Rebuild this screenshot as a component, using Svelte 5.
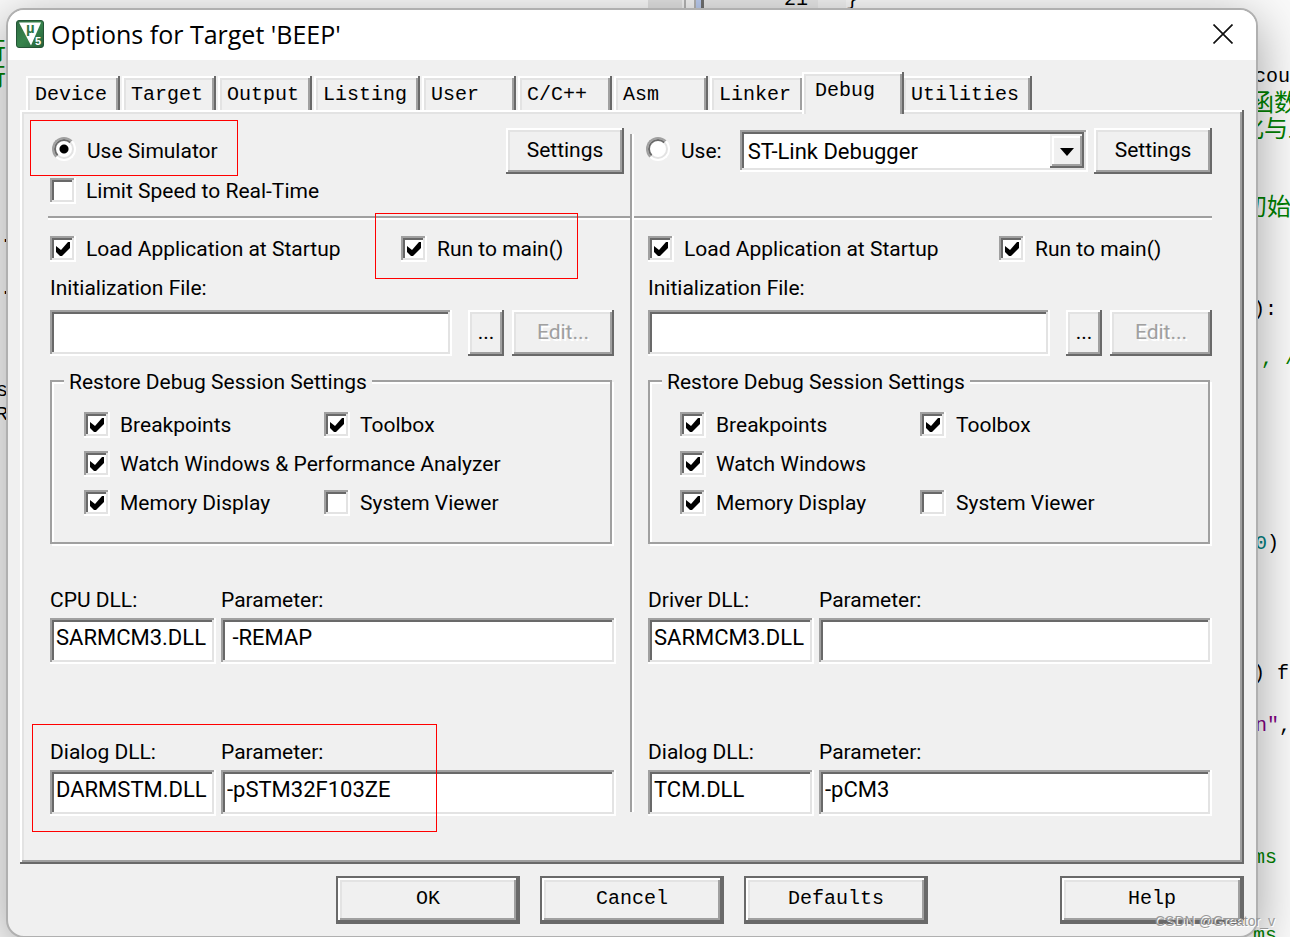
<script lang="ts">
  const tabs = ['Device', 'Target', 'Output', 'Listing', 'User', 'C/C++', 'Asm', 'Linker', 'Debug', 'Utilities'];
  let activeTab = $state('Debug');
  let mode = $state('simulator');

  const panes = $state([
    {
      id: 'sim',
      load: true,
      runToMain: true,
      initFile: '',
      restore: [
        { label: 'Breakpoints', checked: true },
        { label: 'Toolbox', checked: true },
        { label: 'Watch Windows & Performance Analyzer', checked: true, wide: true },
        { label: 'Memory Display', checked: true },
        { label: 'System Viewer', checked: false },
      ],
      dlls: [
        { label: 'CPU DLL:', name: 'SARMCM3.DLL', param: ' -REMAP' },
        { label: 'Dialog DLL:', name: 'DARMSTM.DLL', param: '-pSTM32F103ZE' },
      ],
    },
    {
      id: 'drv',
      load: true,
      runToMain: true,
      initFile: '',
      restore: [
        { label: 'Breakpoints', checked: true },
        { label: 'Toolbox', checked: true },
        { label: 'Watch Windows', checked: true, wide: true },
        { label: 'Memory Display', checked: true },
        { label: 'System Viewer', checked: false },
      ],
      dlls: [
        { label: 'Driver DLL:', name: 'SARMCM3.DLL', param: '' },
        { label: 'Dialog DLL:', name: 'TCM.DLL', param: '-pCM3' },
      ],
    },
  ]);

  // visible scraps of the source editor behind the dialog
  const code = [
    { x: 784, y: -13, text: '21', color: '#000' },
    { x: 846, y: -13, text: '}', color: '#000' },
    { x: 1254, y: 64, text: 'cou', color: '#000' },
    { x: 1250, y: 88, text: '函数', color: '#008000', cjk: true },
    { x: 1240, y: 114, text: '化与工', color: '#008000', cjk: true },
    { x: 1243, y: 192, text: '初始', color: '#008000', cjk: true },
    { x: 1253, y: 297, text: '):', color: '#000' },
    { x: 1261, y: 346, text: ', /', color: '#008000' },
    { x: 1255, y: 531, text: '0', color: '#008080' },
    { x: 1267, y: 531, text: ')', color: '#000' },
    { x: 1253, y: 661, text: ') f', color: '#000' },
    { x: 1255, y: 713, text: 'n"', color: '#800080' },
    { x: 1279, y: 713, text: ',', color: '#000' },
    { x: 1253, y: 845, text: 'ms', color: '#008000' },
    { x: 1253, y: 923, text: 'ms', color: '#008000' },
    { x: -18, y: 36, text: '行', color: '#008000', cjk: true },
    { x: -18, y: 62, text: '行', color: '#008000', cjk: true },
    { x: 0, y: 224, text: '.', color: '#000' },
    { x: 0, y: 276, text: '.', color: '#000' },
    { x: -4, y: 378, text: 's', color: '#000' },
    { x: -4, y: 402, text: 'R', color: '#000' },
  ];
</script>

<div class="desktop">
  <div class="editor" aria-hidden="true">
    <div class="gutter"></div>
    {#each code as bit}
      <span class:cjk={bit.cjk} style="left: {bit.x}px; top: {bit.y}px; color: {bit.color}">{bit.text}</span>
    {/each}
  </div>

  <div class="dialog" role="dialog" aria-labelledby="dialog-title">
    <header class="titlebar">
      <svg class="logo" viewBox="0 0 28 28" aria-hidden="true">
        <defs>
          <linearGradient id="logo-bg" x1="0" y1="0" x2="1" y2="1">
            <stop offset="0" stop-color="#2f6b42" />
            <stop offset="0.5" stop-color="#37844c" />
            <stop offset="1" stop-color="#25603a" />
          </linearGradient>
        </defs>
        <rect x="0.5" y="0.5" width="27" height="27" rx="2.5" fill="url(#logo-bg)" stroke="#245436" />
        <path d="M3 2.5H25L15 25.5Z" fill="#fff" />
        <text class="mu" x="10" y="13">µ</text>
        <text class="five" x="19" y="25">5</text>
      </svg>
      <h1 id="dialog-title">Options for Target 'BEEP'</h1>
      <button class="close" aria-label="Close">
        <svg viewBox="0 0 20 20"><path d="M0.5 0.5L19.5 19.5M19.5 0.5L0.5 19.5" fill="none" stroke="#111" stroke-width="1.7" /></svg>
      </button>
    </header>

    <div class="tabs" role="tablist">
      {#each tabs as tab}
        <button
          class="tab"
          class:active={tab === activeTab}
          role="tab"
          aria-selected={tab === activeTab}
          onclick={() => (activeTab = tab)}>{tab}</button>
      {/each}
    </div>

    <main class="panel">
      {#each panes as pane, i}
        {#if i === 1}
          <div class="divider"></div>
        {/if}
        <section class="pane {pane.id}">
          <div class="top">
            {#if pane.id === 'sim'}
              <div class="line">
                <label class="check"><input type="radio" name="mode" value="simulator" bind:group={mode} />Use Simulator</label>
                <button class="btn settings">Settings</button>
              </div>
              <label class="check"><input type="checkbox" />Limit Speed to Real-Time</label>
            {:else}
              <div class="line">
                <label class="check"><input type="radio" name="mode" value="driver" bind:group={mode} />Use:</label>
                <div class="combo">
                  <select aria-label="Debug driver">
                    <option>ST-Link Debugger</option>
                  </select>
                  <span class="arrow"></span>
                </div>
                <button class="btn settings">Settings</button>
              </div>
            {/if}
          </div>

          <hr />

          <div class="startup">
            <label class="check"><input type="checkbox" bind:checked={pane.load} />Load Application at Startup</label>
            <label class="check"><input type="checkbox" bind:checked={pane.runToMain} />Run to main()</label>
          </div>

          <label class="caption" for="{pane.id}-init">Initialization File:</label>
          <div class="file">
            <input class="field" type="text" id="{pane.id}-init" bind:value={pane.initFile} />
            <button class="btn browse" aria-label="Browse">...</button>
            <button class="btn edit" disabled>Edit...</button>
          </div>

          <fieldset>
            <legend>Restore Debug Session Settings</legend>
            <div class="options">
              {#each pane.restore as item}
                <label class="check" class:wide={item.wide}>
                  <input type="checkbox" bind:checked={item.checked} />{item.label}
                </label>
              {/each}
            </div>
          </fieldset>

          {#each pane.dlls as dll, n}
            <div class="dll">
              <label class="caption" for="{pane.id}-dll-{n}">{dll.label}</label>
              <label class="caption" for="{pane.id}-param-{n}">Parameter:</label>
              <input class="field" type="text" id="{pane.id}-dll-{n}" bind:value={dll.name} />
              <input class="field" type="text" id="{pane.id}-param-{n}" bind:value={dll.param} />
            </div>
          {/each}
        </section>
      {/each}

      <div class="mark mark-simulator"></div>
      <div class="mark mark-run"></div>
      <div class="mark mark-dialog"></div>
    </main>

    <footer>
      <button class="action">OK</button>
      <button class="action">Cancel</button>
      <button class="action">Defaults</button>
      <button class="action help">Help</button>
    </footer>
  </div>

  <div class="watermark">CSDN @Greator_v</div>
</div>

<style>
  :global(body) {
    margin: 0;
    background: #fafafa;
  }

  .desktop {
    position: relative;
    box-sizing: border-box;
    height: 100vh;
    padding: 8px 32px 0 6px;
    overflow: hidden;
    font-family: Roboto, sans-serif;
    font-size: 21px;
    line-height: 28px;
    color: #000;
  }

  .editor {
    position: absolute;
    inset: 0;
    font: 20px/26px 'Liberation Mono', monospace;
  }
  .editor span {
    position: absolute;
    white-space: pre;
  }
  .editor .cjk {
    font-family: 'Noto Sans CJK SC', sans-serif;
    font-size: 24px;
  }
  .gutter {
    height: 8px;
    margin-left: 648px;
    background: linear-gradient(
      to right,
      #e2e2e2 34px, #f4f4f4 34px 36px, #b4b4b4 36px 38px, #f4f4f4 38px 46px, #b4b4b4 46px 48px,
      #bccdf0 48px 53px, #707070 53px 56px, #e8e8e8 56px 170px, #f2f2f2 170px 198px, transparent 198px
    );
  }

  .dialog {
    position: relative;
    box-sizing: border-box;
    border: 2px solid #b0b0b0;
    border-radius: 18px;
    background: #f0f0f0;
    box-shadow: 0 12px 50px rgba(0, 0, 0, 0.36);
    overflow: hidden;
  }

  button,
  input,
  select {
    margin: 0;
    border: 0;
    border-radius: 0;
    font: inherit;
    color: inherit;
  }

  .titlebar {
    display: flex;
    align-items: center;
    box-sizing: border-box;
    height: 50px;
    padding: 0 23px 2px 8px;
    background: #fff;
  }
  .logo {
    width: 28px;
    height: 28px;
    font-family: 'Liberation Sans', sans-serif;
    font-weight: bold;
  }
  .mu {
    font-size: 15px;
    fill: #2f7746;
  }
  .five {
    font-size: 11px;
    fill: #fff;
  }
  h1 {
    flex: 1;
    margin: 0 0 0 7px;
    font: 400 25px/32px 'Open Sans', sans-serif;
  }
  .close {
    width: 20px;
    height: 20px;
    padding: 0;
    background: none;
  }
  .close svg {
    display: block;
  }

  .tabs {
    display: flex;
    align-items: flex-end;
    gap: 2px;
    padding: 16px 18px 0;
  }
  .tab {
    min-width: 94px;
    height: 34px;
    padding: 4px 13px 0 9px;
    background: #f0f0f0;
    box-shadow: inset 2px 0 #fff, inset -2px 0 #696969, inset 0 2px #fff, inset -4px 0 #a0a0a0, inset 4px 4px #e3e3e3;
    font: 20px/28px 'Liberation Mono', monospace;
    text-align: left;
  }
  .tab.active {
    position: relative;
    z-index: 1;
    height: 42px;
    margin: -4px -4px -4px;
    padding: 0 15px 4px 13px;
    min-width: 102px;
  }

  .panel {
    position: relative;
    display: grid;
    grid-template-columns: calc(50% - 1px) 4px 1fr;
    margin: 0 12px;
    padding: 18px 30px 48px 28px;
    box-shadow: inset -2px -2px #696969, inset 2px 2px #fff, inset -4px -4px #a0a0a0, inset 4px 4px #e3e3e3;
  }
  .divider {
    margin: 6px 0 4px;
    background: linear-gradient(to right, #a0a0a0 2px, #fff 2px);
  }

  .sim {
    padding: 0 16px 0 2px;
  }
  .drv {
    padding: 0 2px 0 14px;
  }

  .top {
    height: 88px;
  }
  .line {
    display: flex;
    align-items: center;
    height: 46px;
  }
  .drv .line {
    margin-left: -4px;
  }
  .top > .check {
    height: 34px;
  }
  .sim .settings {
    margin: 0 -10px 0 auto;
  }
  .drv .settings {
    margin-left: 6px;
  }

  hr {
    height: 2px;
    margin: 0 -16px 0 -2px;
    border: 0;
    border-bottom: 2px solid #fff;
    background: #a0a0a0;
  }
  .drv hr {
    margin: 0 0 0 -14px;
  }

  .check {
    display: flex;
    align-items: center;
    gap: 10px;
    white-space: nowrap;
  }
  input[type='checkbox'],
  input[type='radio'] {
    appearance: none;
    display: grid;
    place-content: center;
    flex: none;
    width: 26px;
    height: 26px;
    background: #fff;
  }
  input[type='checkbox'],
  .field,
  .combo {
    box-shadow: inset -2px -2px #fff, inset 2px 2px #a0a0a0, inset -4px -4px #e3e3e3, inset 4px 4px #696969;
  }
  input[type='checkbox']:checked::before {
    content: '';
    width: 14px;
    height: 14px;
    background: #000;
    clip-path: polygon(0 4px, 5px 8px, 12px 0, 14px 0, 14px 6px, 6px 14px, 4px 14px, 0 10px);
  }
  input[type='radio'] {
    box-sizing: border-box;
    width: 24px;
    height: 24px;
    margin: 0 1px 4px 2px;
    border: 2px solid;
    border-color: #a0a0a0 #fff #fff #a0a0a0;
    border-radius: 50%;
  }
  input[type='radio']::before {
    content: '';
    box-sizing: border-box;
    width: 20px;
    height: 20px;
    border: 2px solid;
    border-color: #696969 #e3e3e3 #e3e3e3 #696969;
    border-radius: 50%;
  }
  input[type='radio']:checked::before {
    background: radial-gradient(circle, #000 4px, transparent 5px);
  }

  .btn {
    flex: none;
    height: 46px;
    padding: 0 0 2px;
    background: #f0f0f0;
    box-shadow: inset -2px -2px #696969, inset 2px 2px #fff, inset -4px -4px #a0a0a0, inset 4px 4px #e3e3e3;
  }
  .settings {
    width: 118px;
  }
  .browse {
    width: 36px;
    margin-left: 16px;
  }
  .edit {
    width: 102px;
    margin-left: 8px;
  }
  .edit:disabled {
    color: #a0a0a0;
    text-shadow: 2px 2px #fff;
  }

  .combo {
    position: relative;
    flex: 1;
    height: 42px;
    margin-left: 18px;
    background: #fff;
  }
  select {
    appearance: none;
    width: 100%;
    height: 42px;
    padding: 2px 40px 0 8px;
    background: none;
    font-size: 22px;
  }
  .arrow {
    position: absolute;
    top: 4px;
    right: 4px;
    bottom: 4px;
    width: 34px;
    background: #f0f0f0;
    box-shadow: inset -2px -2px #696969, inset 2px 2px #f0f0f0, inset -4px -4px #a0a0a0, inset 4px 4px #fff;
    pointer-events: none;
  }
  .arrow::before {
    content: '';
    position: absolute;
    top: 14px;
    left: 10px;
    border: 7px solid transparent;
    border-top: 8px solid #000;
    border-bottom: 0;
  }

  .startup {
    display: grid;
    grid-template-columns: 351px 1fr;
    align-items: center;
    height: 30px;
    margin: 14px 0 10px;
  }
  .caption {
    display: block;
  }
  .file {
    display: flex;
    margin-top: 8px;
  }
  .field {
    box-sizing: border-box;
    width: 100%;
    min-width: 0;
    height: 46px;
    padding: 0 4px 8px 6px;
    background: #fff;
    font-size: 22px;
  }

  fieldset {
    box-sizing: border-box;
    min-width: 0;
    height: 178px;
    margin: 10px 2px 0 0;
    padding: 0 0 0 12px;
    border: 2px solid #a0a0a0;
    box-shadow: 2px 2px #fff, inset 2px 2px #fff;
  }
  legend {
    padding: 2px 5px 0;
    background: #f0f0f0;
  }
  .options {
    display: grid;
    grid-template-columns: 240px 1fr;
    gap: 13px 0;
    padding: 16px 0 0 20px;
  }
  .drv .options {
    padding-left: 18px;
  }
  .options .check {
    height: 26px;
  }
  .wide {
    grid-column: 1 / -1;
  }

  .dll {
    display: grid;
    grid-template-columns: 166px 1fr;
    gap: 4px 5px;
    margin: 42px 0 0;
  }
  .sim .dll {
    margin-right: -2px;
  }
  .dll + .dll {
    margin-top: 74px;
  }

  .mark {
    position: absolute;
    box-sizing: border-box;
    border: 1px solid #f00;
    pointer-events: none;
  }
  .mark-simulator {
    top: 10px;
    left: 10px;
    width: 208px;
    height: 56px;
  }
  .mark-run {
    top: 103px;
    left: 355px;
    width: 203px;
    height: 66px;
  }
  .mark-dialog {
    top: 614px;
    left: 12px;
    width: 405px;
    height: 108px;
  }

  footer {
    display: flex;
    gap: 20px;
    padding: 12px 12px 12px 328px;
  }
  .action {
    width: 184px;
    height: 48px;
    padding: 0 0 2px;
    background: #f0f0f0;
    box-shadow: inset 0 0 0 2px #696969, inset -4px -4px #696969, inset 4px 4px #fff, inset -6px -6px #a0a0a0, inset 6px 6px #e3e3e3;
    font: 20px/28px 'Liberation Mono', monospace;
  }
  .help {
    margin-left: auto;
  }

  .watermark {
    position: absolute;
    right: 15px;
    bottom: 6px;
    font: 14px/20px 'Liberation Sans', sans-serif;
    color: #999;
    text-shadow: 1px 1px #fff;
  }
</style>
